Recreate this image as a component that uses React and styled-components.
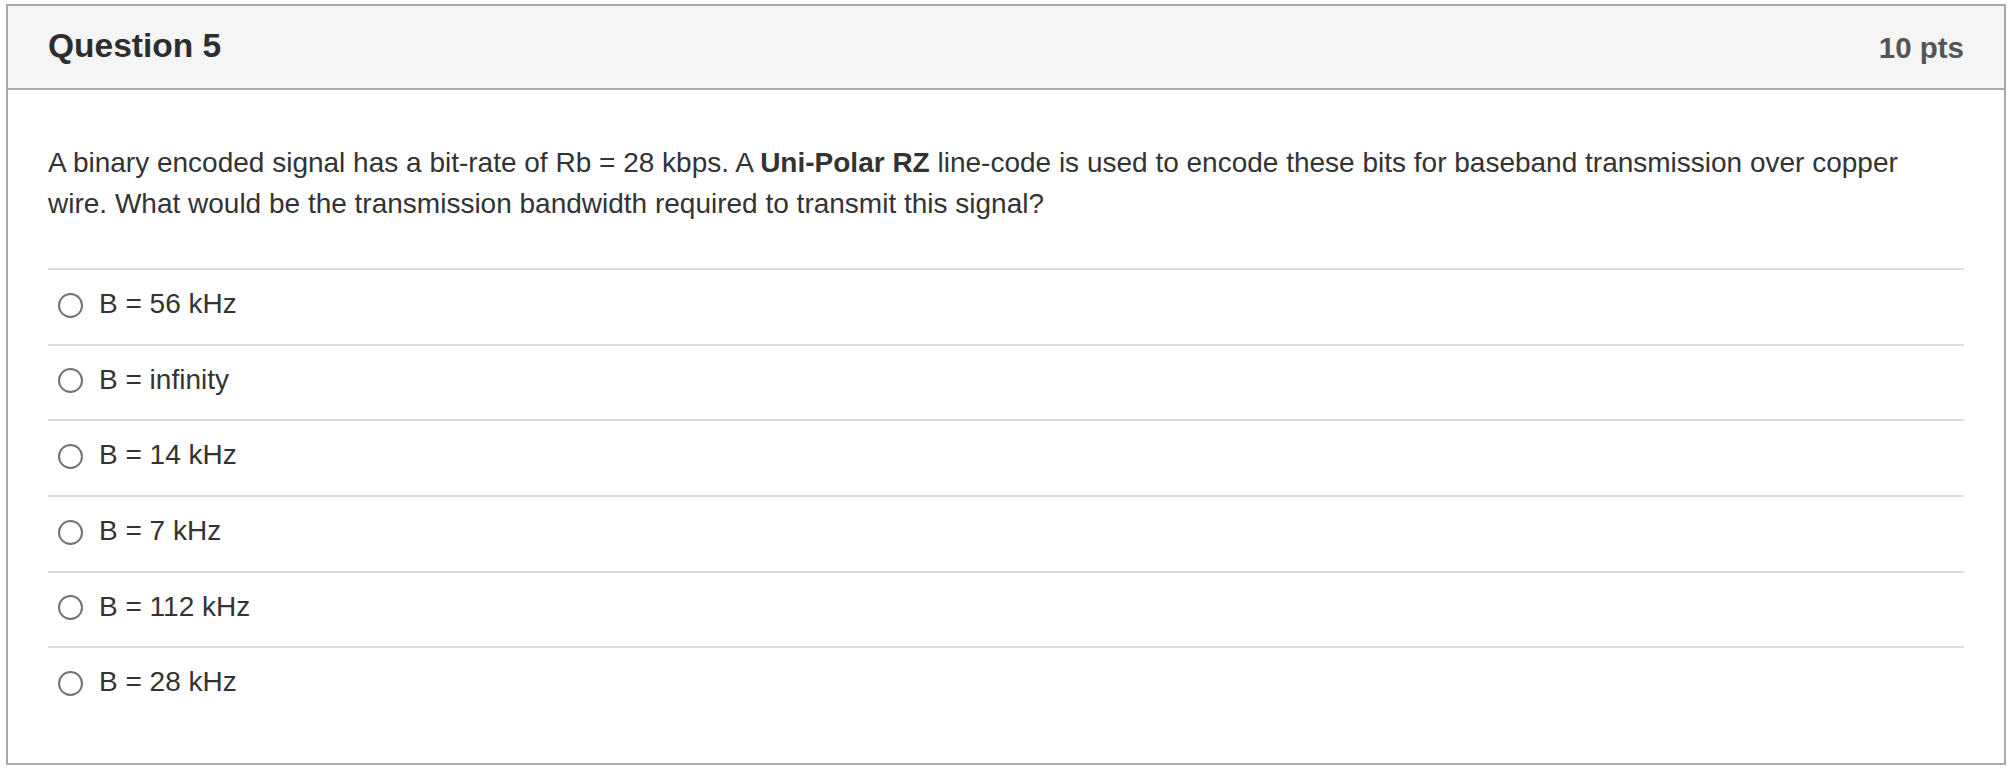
import React from "react";
import styled, { createGlobalStyle } from "styled-components";

const GlobalStyle = createGlobalStyle`
  html, body {
    margin: 0;
    padding: 0;
    background: #ffffff;
  }
  body {
    padding: 4px 2px 0 6px;
    font-family: "Liberation Sans", Arial, sans-serif;
    color: #333333;
  }
`;

const Card = styled.section`
  width: 2000px;
  height: 761px;
  box-sizing: border-box;
  border: 2px solid #a9a9a9;
  display: flex;
  flex-direction: column;
  background: #ffffff;
`;

const Header = styled.header`
  height: 84px;
  box-sizing: border-box;
  border-bottom: 2px solid #a9a9a9;
  background: #f5f5f5;
  display: flex;
  align-items: center;
  justify-content: space-between;
  padding: 0 40px 0 40px;
`;

const Title = styled.h2`
  margin: 0 0 3px 0;
  font-size: 33.5px;
  font-weight: 700;
  line-height: normal;
  color: #2d2d30;
`;

const Points = styled.div`
  margin-top: 1px;
  font-size: 29.5px;
  font-weight: 700;
  line-height: normal;
  color: #555555;
`;

const Body = styled.div`
  flex: 1;
  padding: 52px 40px 0 40px;
`;

const QuestionText = styled.p`
  margin: 0 0 44px 0;
  font-size: 28px;
  line-height: 41px;
  color: #333333;
`;

const Answers = styled.ul`
  list-style: none;
  margin: 0;
  padding: 0;
`;

const Answer = styled.li`
  border-top: 2px solid #dcdcdc;
  height: 73.7px;
  box-sizing: content-box;
  display: flex;
  align-items: flex-start;
  padding: 0 0 0 10px;
`;

const Label = styled.label`
  display: flex;
  align-items: center;
  gap: 16px;
  margin-top: 13px;
  font-size: 28px;
  line-height: 41px;
  color: #333333;
  cursor: pointer;
`;

const Radio = styled.span`
  width: 25px;
  height: 25px;
  box-sizing: border-box;
  border: 2px solid #727272;
  border-radius: 50%;
  background: #ffffff;
  margin-top: 3px;
  flex: none;
`;

const answers = [
  "B = 56 kHz",
  "B = infinity",
  "B = 14 kHz",
  "B = 7 kHz",
  "B = 112 kHz",
  "B = 28 kHz",
];

export default function App() {
  return (
    <>
      <GlobalStyle />
      <Card>
        <Header>
          <Title>Question 5</Title>
          <Points>10 pts</Points>
        </Header>
        <Body>
          <QuestionText>
            A binary encoded signal has a bit-rate of Rb = 28 kbps. A{" "}
            <strong>Uni-Polar RZ</strong> line-code is used to encode these bits
            for baseband transmission over copper wire. What would be the
            transmission bandwidth required to transmit this signal?
          </QuestionText>
          <Answers>
            {answers.map((a) => (
              <Answer key={a}>
                <Label>
                  <Radio />
                  {a}
                </Label>
              </Answer>
            ))}
          </Answers>
        </Body>
      </Card>
    </>
  );
}
